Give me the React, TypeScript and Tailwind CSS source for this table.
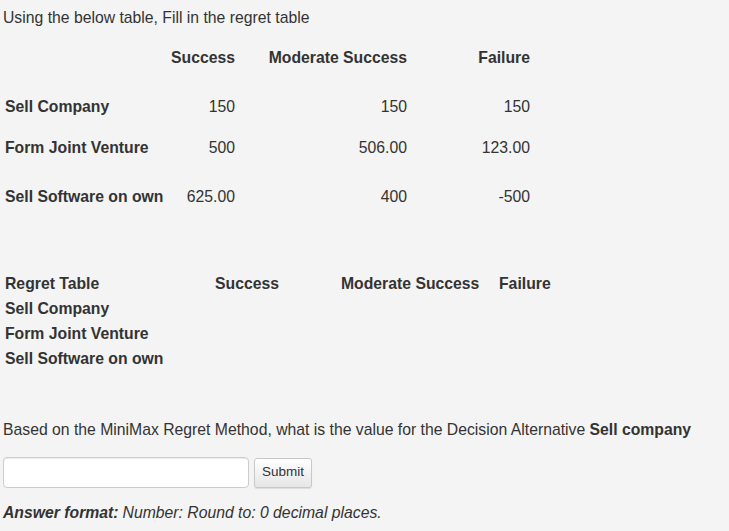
import React from 'react';

const rows = [
  { name: 'Sell Company', s: '150', m: '150', f: '150', h: 'h-[52px]' },
  { name: 'Form Joint Venture', s: '500', m: '506.00', f: '123.00', h: 'h-[30px]' },
  { name: 'Sell Software on own', s: '625.00', m: '400', f: '-500', h: 'h-[68px]' },
];

export default function App() {
  return (
    <div
      className="min-h-screen w-full bg-[#f4f4f4] text-[#333333] text-[15.75px] pl-[3px] pt-[1px]"
      style={{ fontFamily: '"Liberation Sans", Arial, sans-serif' }}
    >
      <div className="h-[34px] flex items-center">Using the below table, Fill in the regret table</div>

      {/* payoff table */}
      <div className="ml-[2px]">
        <div className="grid grid-cols-[165px_65px_172px_123px] h-[46px] items-center font-bold">
          <div></div>
          <div className="text-right">Success</div>
          <div className="text-right">Moderate Success</div>
          <div className="text-right">Failure</div>
        </div>
        {rows.map((r) => (
          <div key={r.name} className={`grid grid-cols-[165px_65px_172px_123px] items-center ${r.h}`}>
            <div className="font-bold whitespace-nowrap">{r.name}</div>
            <div className="text-right">{r.s}</div>
            <div className="text-right">{r.m}</div>
            <div className="text-right">{r.f}</div>
          </div>
        ))}
      </div>

      {/* regret table */}
      <div className="ml-[2px] mt-[40px] font-bold">
        <div className="grid grid-cols-[210px_126px_158px_80px] h-[25px] items-center">
          <div>Regret Table</div>
          <div>Success</div>
          <div>Moderate Success</div>
          <div>Failure</div>
        </div>
        <div className="h-[25px] flex items-center">Sell Company</div>
        <div className="h-[25px] flex items-center">Form Joint Venture</div>
        <div className="h-[25px] flex items-center">Sell Software on own</div>
      </div>

      <div className="mt-[46px] h-[25px] flex items-center">
        <span>
          Based on the MiniMax Regret Method, what is the value for the Decision Alternative{' '}
          <b>Sell company</b>
        </span>
      </div>

      <div className="mt-[15px] flex items-center gap-[5px]">
        <input
          type="text"
          className="w-[246px] h-[31px] bg-white border border-[#cccccc] rounded-[4px] shadow-[inset_0_1px_1px_rgba(0,0,0,0.075)] px-2 outline-none"
        />
        <button className="w-[58px] h-[30px] text-[13.5px] text-[#333] border border-[#c8c8c8] rounded-[3px] bg-gradient-to-b from-white to-[#e6e6e6] shadow-[0_1px_1px_rgba(0,0,0,0.1)]">
          Submit
        </button>
      </div>

      <div className="mt-[12px] h-[25px] flex items-center italic">
        <b className="mr-[4px]">Answer format:</b> Number: Round to: 0 decimal places.
      </div>
    </div>
  );
}
